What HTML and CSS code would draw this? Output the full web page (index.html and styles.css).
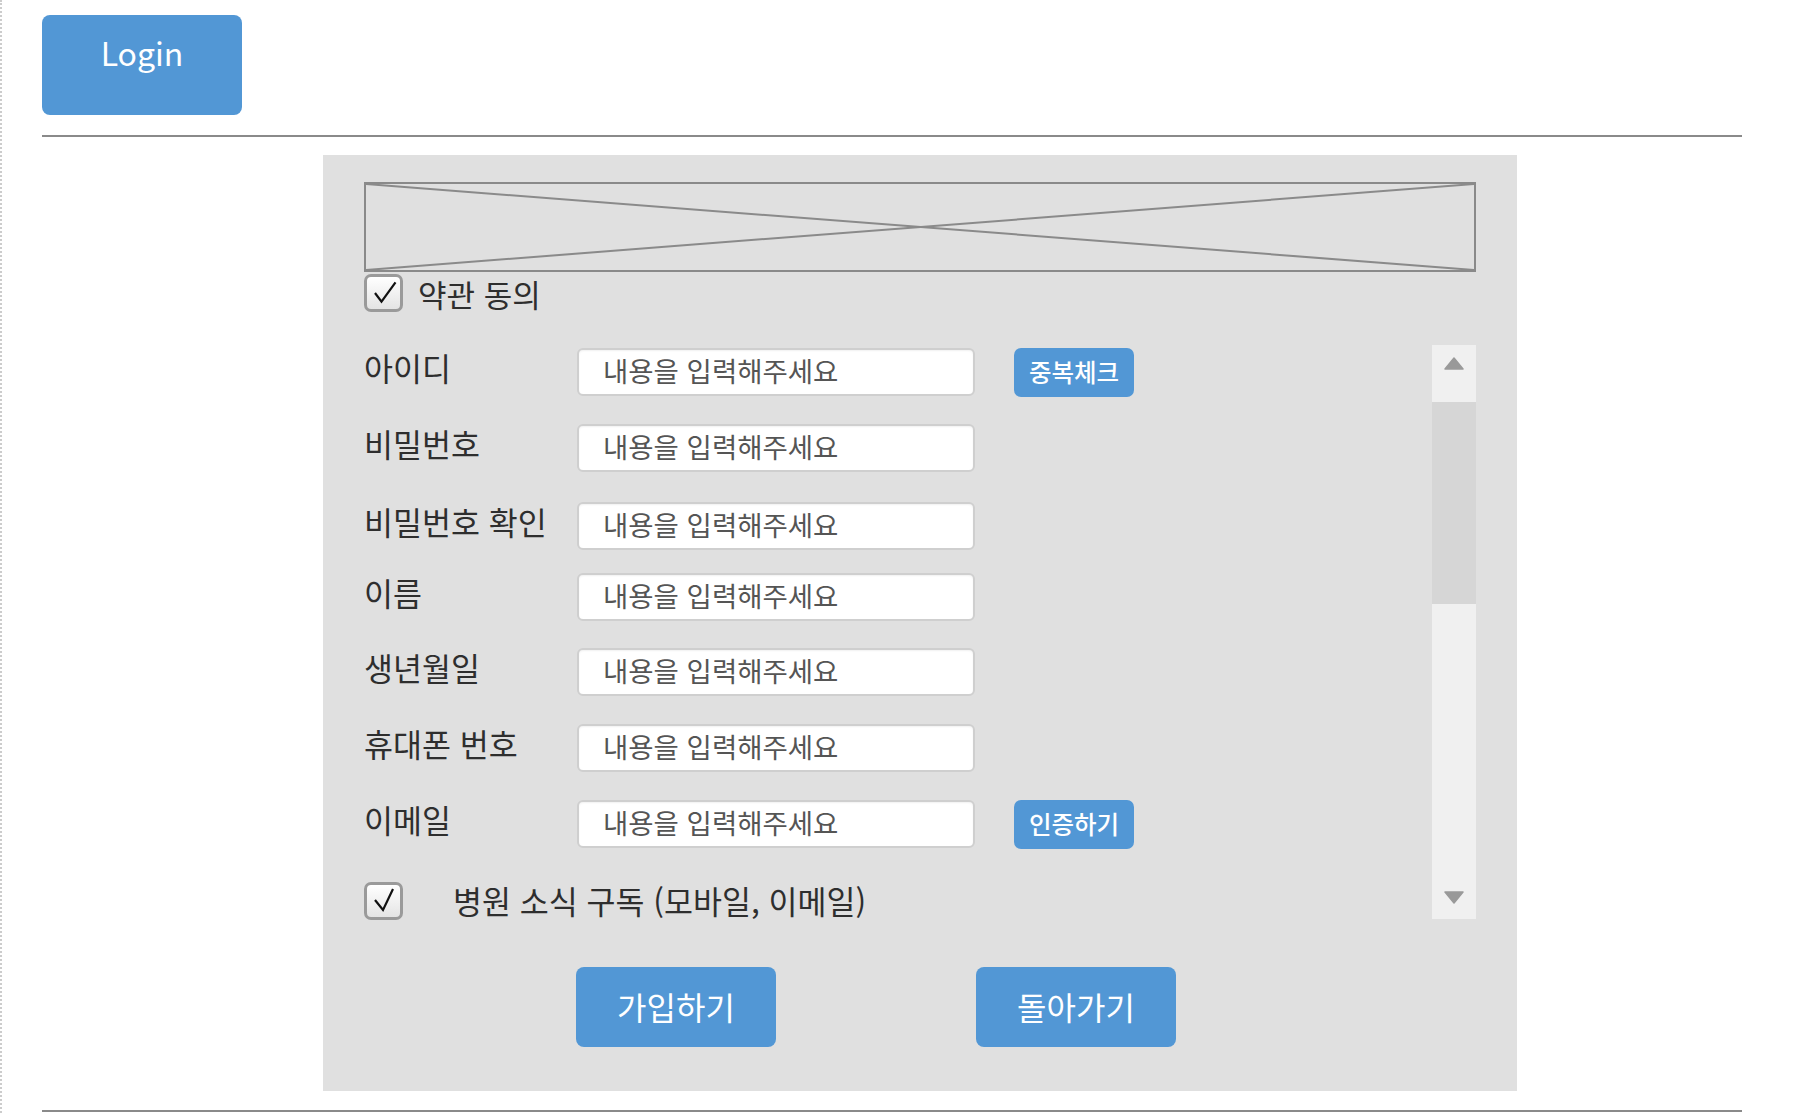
FILE: index.html
```html
<!DOCTYPE html>
<html lang="ko">
<head>
<meta charset="utf-8">
<title>회원가입</title>
<link rel="stylesheet" href="styles.css">
</head>
<body>
<div class="page">
  <header class="header">
    <div class="login-btn">Login</div>
  </header>
  <div class="rule"></div>

  <main class="panel">
    <div class="banner">
      <svg class="banner-x" viewBox="0 0 100 100" preserveAspectRatio="none">
        <line x1="0" y1="0" x2="100" y2="100" vector-effect="non-scaling-stroke"/>
        <line x1="100" y1="0" x2="0" y2="100" vector-effect="non-scaling-stroke"/>
      </svg>
    </div>

    <div class="agree">
      <span class="check">
        <svg viewBox="0 0 33 32"><polyline points="8,16 14.5,24.7 28.5,5.3"/></svg>
      </span>
      <span class="agree-text">약관 동의</span>
    </div>

    <div class="form-area">
      <div class="fields">
        <div class="row">
          <span class="label">아이디</span>
          <input class="input" type="text" placeholder="내용을 입력해주세요">
          <span class="small-btn">중복체크</span>
        </div>
        <div class="row">
          <span class="label">비밀번호</span>
          <input class="input" type="text" placeholder="내용을 입력해주세요">
        </div>
        <div class="row row-3">
          <span class="label">비밀번호 확인</span>
          <input class="input" type="text" placeholder="내용을 입력해주세요">
        </div>
        <div class="row row-4">
          <span class="label">이름</span>
          <input class="input" type="text" placeholder="내용을 입력해주세요">
        </div>
        <div class="row row-5">
          <span class="label">생년월일</span>
          <input class="input" type="text" placeholder="내용을 입력해주세요">
        </div>
        <div class="row">
          <span class="label">휴대폰 번호</span>
          <input class="input" type="text" placeholder="내용을 입력해주세요">
        </div>
        <div class="row">
          <span class="label">이메일</span>
          <input class="input" type="text" placeholder="내용을 입력해주세요">
          <span class="small-btn">인증하기</span>
        </div>

        <div class="subscribe">
          <span class="check">
            <svg viewBox="0 0 33 32"><polyline points="8,15 16,25 26,4"/></svg>
          </span>
          <span class="subscribe-text">병원 소식 구독 (모바일, 이메일)</span>
        </div>
      </div>

      <div class="scrollbar">
        <div class="sb-up">
          <svg class="arrow" viewBox="0 0 20 13"><polygon points="10,1 19,12 1,12"/></svg>
        </div>
        <div class="sb-thumb"></div>
        <div class="sb-rest">
          <svg class="arrow" viewBox="0 0 20 13"><polygon points="1,1 19,1 10,12"/></svg>
        </div>
      </div>
    </div>

    <div class="actions">
      <span class="big-btn">가입하기</span>
      <span class="big-btn">돌아가기</span>
    </div>
  </main>

  <div class="rule rule-bottom"></div>
</div>
</body>
</html>
```

FILE: styles.css
```css
* {
  box-sizing: border-box;
}

html,
body {
  margin: 0;
  padding: 0;
  background: #ffffff;
}

body {
  font-family: "Noto Sans CJK KR", "Noto Sans", sans-serif;
  color: #333333;
}

.page {
  width: 1794px;
  min-height: 1113px;
  border-left: 2px dotted #cccccc;
  padding: 15px 0 0 40px;
}

.login-btn {
  width: 200px;
  height: 100px;
  background: #5297d5;
  border-radius: 8px;
  color: #ffffff;
  font-size: 32px;
  line-height: 1.2;
  text-align: center;
  padding-top: 18px;
}

.rule {
  width: 1700px;
  height: 2px;
  background: #8a8a8a;
  margin-top: 20px;
}

.rule-bottom {
  margin-top: 19px;
}

.panel {
  display: block;
  width: 1194px;
  height: 936px;
  margin: 18px 0 0 281px;
  background: #e0e0e0;
  padding: 27px 41px 0 41px;
}

.banner {
  height: 90px;
  border: 2px solid #8a8a8a;
}

.banner-x {
  display: block;
  width: 100%;
  height: 100%;
}

.banner-x line {
  stroke: #8a8a8a;
  stroke-width: 2;
}

.check {
  display: block;
  flex: none;
  width: 39px;
  height: 38px;
  border: 3px solid #9a9a9a;
  border-radius: 7px;
  background: linear-gradient(#ffffff, #e4e4e4);
}

.check svg {
  display: block;
  width: 100%;
  height: 100%;
}

.check polyline {
  fill: none;
  stroke: #111111;
  stroke-width: 2.2;
  stroke-linejoin: miter;
}

.agree {
  display: flex;
  align-items: center;
  gap: 15px;
  height: 38px;
  margin-top: 2px;
}

.agree-text {
  font-size: 31px;
  line-height: 1;
  color: #2e2e2e;
}

.form-area {
  display: flex;
  height: 574px;
  margin-top: 33px;
}

.fields {
  flex: 1;
  padding-top: 3px;
}

.row {
  display: flex;
  align-items: center;
  height: 48px;
}

.row + .row {
  margin-top: 28px;
}

.row + .row-3 {
  margin-top: 30px;
}

.row + .row-4 {
  margin-top: 23px;
}

.row + .row-5 {
  margin-top: 27px;
}

.label {
  width: 213px;
  flex: none;
  font-size: 31.5px;
  line-height: 1;
  margin-bottom: 9px;
  color: #2e2e2e;
  white-space: nowrap;
}

.input {
  width: 398px;
  height: 48px;
  flex: none;
  border: 2px solid #cfcfcf;
  border-radius: 6px;
  background: #ffffff;
  box-shadow: inset 0 1px 2px rgba(0, 0, 0, 0.06);
  font-family: "Noto Sans CJK KR", "Noto Sans", sans-serif;
  font-size: 27.5px;
  color: #555555;
  padding: 0 0 5px 24px;
  outline: none;
}

.input::placeholder {
  color: #555555;
  opacity: 1;
}

.small-btn {
  display: flex;
  align-items: center;
  justify-content: center;
  width: 120px;
  height: 49px;
  margin-left: 39px;
  background: #5297d5;
  border-radius: 7px;
  color: #ffffff;
  font-size: 24.5px;
  font-weight: 500;
  padding-bottom: 2px;
}

.subscribe {
  display: flex;
  align-items: center;
  gap: 50px;
  height: 38px;
  margin-top: 34px;
}

.subscribe-text {
  font-size: 31.5px;
  line-height: 1;
  color: #2e2e2e;
}

.scrollbar {
  display: flex;
  flex-direction: column;
  width: 44px;
  flex: none;
  background: #f0f0f0;
}

.sb-up {
  height: 57px;
  display: flex;
  justify-content: center;
  align-items: flex-start;
  padding-top: 12px;
}

.sb-thumb {
  height: 202px;
  background: #d6d6d6;
}

.sb-rest {
  flex: 1;
  display: flex;
  justify-content: center;
  align-items: flex-end;
  padding-bottom: 15px;
}

.arrow {
  display: block;
  width: 20px;
  height: 13px;
}

.arrow polygon {
  fill: #999999;
  stroke: #999999;
  stroke-width: 1.5;
  stroke-linejoin: round;
}

.actions {
  display: flex;
  gap: 200px;
  margin-top: 48px;
  padding-left: 212px;
}

.big-btn {
  display: flex;
  align-items: center;
  justify-content: center;
  width: 200px;
  height: 80px;
  background: #5297d5;
  border-radius: 8px;
  color: #ffffff;
  font-size: 32px;
  padding-bottom: 3px;
}
```
